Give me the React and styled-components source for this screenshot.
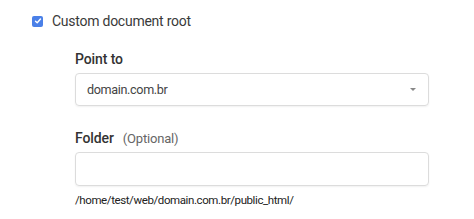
import React from "react";
import styled, { createGlobalStyle } from "styled-components";

const Global = createGlobalStyle`
  html, body { margin: 0; padding: 0; background: #fff; }
  body { font-family: "Roboto", "Lato", sans-serif; color: #333; }
`;

const Page = styled.div`
  padding: 12px 0 0 32px;
  width: 474px;
  box-sizing: border-box;
`;

const CheckRow = styled.label`
  display: flex;
  align-items: center;
  gap: 9px;
  font-size: 14px;
  letter-spacing: -0.25px;
  color: #3a3a3a;
  height: 18px;
`;

const Box = styled.span`
  width: 11px;
  height: 11px;
  border-radius: 2px;
  background: #4a80e8;
  display: flex;
  align-items: center;
  justify-content: center;
`;

const Fields = styled.div`
  padding-left: 43px;
  width: 354px;
  display: flex;
  flex-direction: column;
`;

const Label = styled.div`
  font-size: 14px;
  font-weight: 500;
  letter-spacing: -0.1px;
  color: #333;
  margin-top: ${(p) => p.$top}px;
  height: 20px;
  display: flex;
  align-items: center;
  gap: 9px;
`;

const Hint = styled.span`
  font-weight: 400;
  color: #666;
  font-size: 13px;
  letter-spacing: -0.2px;
`;

const Field = styled.div`
  margin-top: ${(p) => p.$top}px;
  height: ${(p) => p.$h}px;
  box-sizing: border-box;
  border: 1px solid #dcdcdc;
  border-radius: 4px;
  box-shadow: 0 1px 2px rgba(0, 0, 0, 0.06);
  display: flex;
  align-items: center;
  justify-content: space-between;
  padding: 0 12px 0 11px;
  font-size: 12.6px;
  letter-spacing: -0.35px;
  color: #444;
`;

const Caret = styled.span`
  width: 0;
  height: 0;
  border-left: 3px solid transparent;
  border-right: 3px solid transparent;
  border-top: 3px solid #888;
`;

const Path = styled.div`
  margin-top: 7px;
  font-size: 11.5px;
  letter-spacing: -0.4px;
  color: #222;
`;

export default function App() {
  return (
    <>
      <Global />
      <Page>
        <CheckRow>
          <Box>
            <svg width="8" height="8" viewBox="0 0 8 8">
              <path d="M1.5 4.2 L3.2 5.8 L6.5 2" stroke="#fff" strokeWidth="1.4" fill="none" strokeLinecap="round" strokeLinejoin="round" />
            </svg>
          </Box>
          Custom document root
        </CheckRow>
        <Fields>
          <Label $top={19}>Point to</Label>
          <Field $top={4} $h={33}>
            domain.com.br
            <Caret />
          </Field>
          <Label $top={22}>
            Folder <Hint>(Optional)</Hint>
          </Label>
          <Field $top={4} $h={34} />
          <Path>/home/test/web/domain.com.br/public_html/</Path>
        </Fields>
      </Page>
    </>
  );
}
